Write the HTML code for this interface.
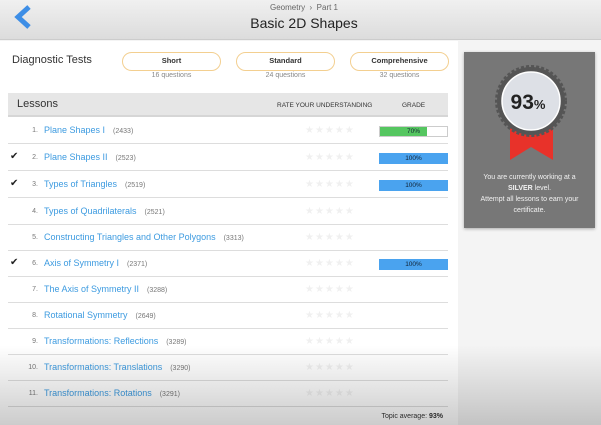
<!DOCTYPE html><html><head><style>
*{margin:0;padding:0;box-sizing:border-box}
body{width:601px;height:425px;overflow:hidden;font-family:"Liberation Sans",sans-serif;background:#f4f4f4;position:relative;color:#333}
#hdr{position:absolute;left:0;top:0;width:601px;height:40px;background:linear-gradient(#f0f0f0,#dcdcdc);border-bottom:1px solid #ccc}
.bc{position:absolute;top:3px;left:0;width:608px;text-align:center;font-size:8px;color:#666}
.tt{position:absolute;top:15px;left:0;width:608px;text-align:center;font-size:14px;color:#222}
#main{position:absolute;left:0;top:41px;width:458px;height:384px;background:#fff}
.dt{position:absolute;left:12px;top:54px;font-size:11px;color:#333}
.btn{position:absolute;top:52px;width:99px;height:19px;border:1.5px solid #f3cf90;border-radius:10px;background:#fff;font-size:7.5px;font-weight:bold;text-align:center;line-height:16px;color:#333}
.sub{position:absolute;top:72px;width:99px;text-align:center;font-size:7px;color:#888}
#lh{position:absolute;left:8px;top:93px;width:440px;height:24px;background:#e6e6e6;border-bottom:2px solid #d6d6d6}
.row{position:absolute;left:8px;width:440px;height:26px;border-bottom:1px solid #ddd;font-size:9px}
.row .n{position:absolute;right:410px;top:9px;font-size:7px;color:#777}
.row .l{position:absolute;left:36px;top:7px;color:#3d9be0}
.row .l span{color:#777;font-size:7px;margin-left:8px}
.row .c{position:absolute;left:2px;top:6px;font-size:10px;color:#222}
.stars{position:absolute;left:297px;top:7px;font-size:10px;color:#f0f0f0;letter-spacing:1px}
.bar{position:absolute;left:371px;top:8px;width:69px;height:11px;border:1px solid #ccc;background:#fff;font-size:6.5px;text-align:center;line-height:9px;color:#123}
#panel{position:absolute;left:464px;top:52px;width:131px;height:176px;background:#777;box-shadow:0 1px 3px rgba(0,0,0,.3)}
#fade{position:absolute;left:0;top:345px;width:601px;height:80px;background:linear-gradient(rgba(0,0,0,0),rgba(0,0,0,.2));pointer-events:none}
</style></head><body>
<div id="hdr"><div class="bc">Geometry &nbsp;›&nbsp; Part 1</div><div class="tt">Basic 2D Shapes</div>
<svg style="position:absolute;left:12px;top:4px" width="22" height="26"><path d="M17 3 L6 13 L17 23" fill="none" stroke="#3d8ee6" stroke-width="5" stroke-linejoin="miter"/></svg></div>
<div id="main"></div>
<div class="dt">Diagnostic Tests</div>
<div class="btn" style="left:122px">Short</div><div class="sub" style="left:122px">16 questions</div>
<div class="btn" style="left:236px">Standard</div><div class="sub" style="left:236px">24 questions</div>
<div class="btn" style="left:350px">Comprehensive</div><div class="sub" style="left:350px">32 questions</div>
<div id="lh"><span style="position:absolute;left:9px;top:5px;font-size:11px">Lessons</span><span style="position:absolute;left:269px;top:9px;font-size:6.5px">RATE YOUR UNDERSTANDING</span><span style="position:absolute;left:394px;top:9px;font-size:6.5px">GRADE</span></div>
<div class="row" style="top:118px"><span class="n">1.</span><span class="l">Plane Shapes I<span>(2433)</span></span><span class="stars">★★★★★</span><div class="bar" style="background:linear-gradient(90deg,#55c660 70%,#fff 70%)">70%</div></div>
<div class="row" style="top:145px"><span class="c">✔</span><span class="n">2.</span><span class="l">Plane Shapes II<span>(2523)</span></span><span class="stars">★★★★★</span><div class="bar" style="background:#4aa3ef;border-color:#4aa3ef">100%</div></div>
<div class="row" style="top:172px"><span class="c">✔</span><span class="n">3.</span><span class="l">Types of Triangles<span>(2519)</span></span><span class="stars">★★★★★</span><div class="bar" style="background:#4aa3ef;border-color:#4aa3ef">100%</div></div>
<div class="row" style="top:199px"><span class="n">4.</span><span class="l">Types of Quadrilaterals<span>(2521)</span></span><span class="stars">★★★★★</span></div>
<div class="row" style="top:225px"><span class="n">5.</span><span class="l">Constructing Triangles and Other Polygons<span>(3313)</span></span><span class="stars">★★★★★</span></div>
<div class="row" style="top:251px"><span class="c">✔</span><span class="n">6.</span><span class="l">Axis of Symmetry I<span>(2371)</span></span><span class="stars">★★★★★</span><div class="bar" style="background:#4aa3ef;border-color:#4aa3ef">100%</div></div>
<div class="row" style="top:277px"><span class="n">7.</span><span class="l">The Axis of Symmetry II<span>(3288)</span></span><span class="stars">★★★★★</span></div>
<div class="row" style="top:303px"><span class="n">8.</span><span class="l">Rotational Symmetry<span>(2649)</span></span><span class="stars">★★★★★</span></div>
<div class="row" style="top:329px"><span class="n">9.</span><span class="l">Transformations: Reflections<span>(3289)</span></span><span class="stars">★★★★★</span></div>
<div class="row" style="top:355px"><span class="n">10.</span><span class="l">Transformations: Translations<span>(3290)</span></span><span class="stars">★★★★★</span></div>
<div class="row" style="top:381px"><span class="n">11.</span><span class="l">Transformations: Rotations<span>(3291)</span></span><span class="stars">★★★★★</span></div>
<div style="position:absolute;left:330px;top:413px;width:113px;text-align:right;font-size:7px">Topic average: <b>93%</b></div>
<div id="panel">
<svg width="131" height="120" style="position:absolute;left:0;top:0">
<path d="M46 66 L46 108 L67 95 L89 108 L89 66 Z" fill="#e8322a"/>
<circle cx="67" cy="49" r="34" fill="#555" stroke="#555" stroke-width="4" stroke-dasharray="3 2"/>
<circle cx="67" cy="49" r="29" fill="#dde0e6" stroke="#fff" stroke-width="1.5"/>
<text x="64" y="57" font-family="Liberation Sans" font-size="21" font-weight="bold" fill="#222" text-anchor="middle">93<tspan font-size="13">%</tspan></text>
</svg>
<div style="position:absolute;left:0;top:120px;width:131px;text-align:center;font-size:7px;line-height:11px;color:#f2f2f2">You are currently working at a<br><b>SILVER</b> level.<br>Attempt all lessons to earn your<br>certificate.</div>
</div>
<div id="fade"></div>
</body></html>
